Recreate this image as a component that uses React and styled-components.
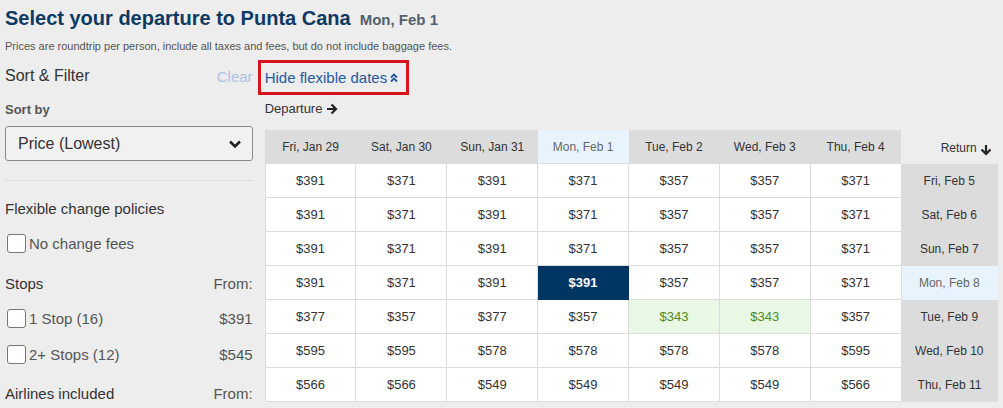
import styled, { createGlobalStyle } from "styled-components"

const Global = createGlobalStyle`
  body {
    margin: 0;
    background: #ededed;
    font-family: "Liberation Sans", Arial, sans-serif;
    color: #333;
  }
`;

const Page = styled.div`
  padding: 6px 5px 0 5px;
`;

const Title = styled.h1`
  margin: 0;
  font-size: 20px;
  font-weight: bold;
  color: #0c3a63;
  line-height: 24px;
`;

const TitleDate = styled.span`
  font-size: 15px;
  color: #52606d;
  margin-left: 9px;
`;

const Note = styled.p`
  margin: 8px 0 0 0;
  font-size: 11px;
  color: #555;
  line-height: 13px;
`;

const Main = styled.div`
  display: flex;
  gap: 12px;
  margin-top: 7px;
`;

const Sidebar = styled.div`
  width: 248px;
  display: flex;
  flex-direction: column;
`;

const SideHead = styled.div`
  display: flex;
  justify-content: space-between;
  align-items: center;
  height: 32px;
`;

const SideTitle = styled.span`
  font-size: 16px;
  color: #333;
`;

const Clear = styled.span`
  font-size: 15px;
  color: #a9c4df;
`;

const Label = styled.div`
  font-size: 13px;
  font-weight: bold;
  color: #555;
  margin-top: 10px;
  line-height: 16px;
`;

const Select = styled.div`
  margin-top: 8px;
  height: 33px;
  border: 1px solid #8a8a8a;
  border-radius: 3px;
  background: #f1f1f1;
  display: flex;
  align-items: center;
  justify-content: space-between;
  padding: 0 10px 0 12px;
  font-size: 16px;
  color: #333;
`;

const Divider = styled.hr`
  border: 0;
  border-top: 1px solid #dcdcdc;
  margin: 19px 0 0 0;
`;

const Row = styled.div`
  display: flex;
  justify-content: space-between;
  align-items: center;
  height: ${p => p.h || 36}px;
  margin-top: ${p => p.mt || 0}px;
  font-size: 15px;
  color: #333;
`;

const Check = styled.label`
  display: flex;
  align-items: center;
  gap: 3px;
  color: #555;
  padding-left: 2px;
`;

const Box = styled.span`
  width: 17px;
  height: 17px;
  border: 1px solid #777;
  border-radius: 3px;
  background: #fff;
`;

const Price = styled.span`
  color: #555;
`;

const Content = styled.div`
  display: flex;
  flex-direction: column;
`;

const ToggleWrap = styled.div`
  height: 35px;
  display: flex;
  align-items: flex-start;
`;

const Toggle = styled.a`
  margin-left: -7px;
  border: 3px solid #d9141e;
  box-sizing: border-box;
  height: 35px;
  padding: 0 8px 0 4px;
  font-size: 15px;
  color: #1f5b9e;
  display: flex;
  align-items: center;
  gap: 3px;
`;

const Axis = styled.div`
  font-size: 13px;
  color: #333;
  margin-top: 6px;
  height: 29px;
  display: flex;
  align-items: flex-start;
  gap: 4px;
  line-height: 15px;
`;

const Table = styled.table`
  border-collapse: collapse;
  table-layout: fixed;
`;

const Head = styled.th`
  width: 91px;
  height: 33px;
  padding: 0;
  font-weight: normal;
  font-size: 12px;
  color: ${p => p.active ? "#666" : "#333"};
  background: ${p => p.active ? "#e8f4fd" : "#dcdcdc"};
`;

const ReturnHead = styled.th`
  width: 91px;
  padding: 3px 5px 0 0;
  font-weight: normal;
  font-size: 12px;
  text-align: right;
  color: #333;
`;

const Cell = styled.td`
  height: 33px;
  padding: 0;
  text-align: center;
  font-size: 13px;
  border: 1px solid #dcdcdc;
  background: ${p => p.selected ? "#003663" : p.low ? "#e9f7e5" : "#fff"};
  color: ${p => p.selected ? "#fff" : p.low ? "#4d8a24" : "#333"};
  font-weight: ${p => p.selected ? "bold" : "normal"};
  border-color: ${p => p.selected ? "#003663" : "#dcdcdc"};
`;

const DateCell = styled.td`
  padding: 0;
  text-align: center;
  font-size: 12px;
  color: ${p => p.active ? "#666" : "#333"};
  background: ${p => p.active ? "#e8f4fd" : "#dcdcdc"};
`;

const ArrowIcon = styled.svg`
  vertical-align: middle;
  margin-top: 2px;
`;

const Arrow = ({ dir }) => (
  <ArrowIcon width="12" height="12" viewBox="0 0 12 12" style={{ transform: dir === "down" ? "rotate(90deg)" : "none" }}>
    <path d="M1 6h9M5.5 1.5L10 6l-4.5 4.5" stroke="#222" strokeWidth="2.2" fill="none" />
  </ArrowIcon>
);

const Chevron = () => (
  <svg width="14" height="10" viewBox="0 0 14 10">
    <path d="M2 2.5l5 5 5-5" stroke="#222" strokeWidth="2.6" fill="none" />
  </svg>
);

const DoubleUp = () => (
  <svg width="8" height="10" viewBox="0 0 8 10">
    <path d="M1 4.5l3-3 3 3M1 8.5l3-3 3 3" stroke="#1f5b9e" strokeWidth="1.8" fill="none" />
  </svg>
);

const departures = ["Fri, Jan 29", "Sat, Jan 30", "Sun, Jan 31", "Mon, Feb 1", "Tue, Feb 2", "Wed, Feb 3", "Thu, Feb 4"];

const rows = [
  { date: "Fri, Feb 5", prices: [391, 371, 391, 371, 357, 357, 371] },
  { date: "Sat, Feb 6", prices: [391, 371, 391, 371, 357, 357, 371] },
  { date: "Sun, Feb 7", prices: [391, 371, 391, 371, 357, 357, 371] },
  { date: "Mon, Feb 8", prices: [391, 371, 391, 391, 357, 357, 371], active: true, selected: 3 },
  { date: "Tue, Feb 9", prices: [377, 357, 377, 357, 343, 343, 357], low: [4, 5] },
  { date: "Wed, Feb 10", prices: [595, 595, 578, 578, 578, 578, 595] },
  { date: "Thu, Feb 11", prices: [566, 566, 549, 549, 549, 549, 566] },
];

const App = () => {
  return (
    <Page>
      <Global />
      <Title>
        Select your departure to Punta Cana<TitleDate>Mon, Feb 1</TitleDate>
      </Title>
      <Note>Prices are roundtrip per person, include all taxes and fees, but do not include baggage fees.</Note>
      <Main>
        <Sidebar>
          <SideHead>
            <SideTitle>Sort &amp; Filter</SideTitle>
            <Clear>Clear</Clear>
          </SideHead>
          <Label>Sort by</Label>
          <Select>
            Price (Lowest)
            <Chevron />
          </Select>
          <Divider />
          <Row mt={9}>Flexible change policies</Row>
          <Row h={34}>
            <Check><Box />No change fees</Check>
          </Row>
          <Row mt={5}>
            <span>Stops</span>
            <Price>From:</Price>
          </Row>
          <Row h={35}>
            <Check><Box />1 Stop (16)</Check>
            <Price>$391</Price>
          </Row>
          <Row>
            <Check><Box />2+ Stops (12)</Check>
            <Price>$545</Price>
          </Row>
          <Row h={42}>
            <span>Airlines included</span>
            <Price>From:</Price>
          </Row>
        </Sidebar>
        <Content>
          <ToggleWrap>
            <Toggle>Hide flexible dates <DoubleUp /></Toggle>
          </ToggleWrap>
          <Axis>Departure <Arrow /></Axis>
          <Table>
            <thead>
              <tr>
                {departures.map(d => (
                  <Head key={d} active={d === "Mon, Feb 1"}>{d}</Head>
                ))}
                <ReturnHead>Return <Arrow dir="down" /></ReturnHead>
              </tr>
            </thead>
            <tbody>
              {rows.map(r => (
                <tr key={r.date}>
                  {r.prices.map((p, i) => (
                    <Cell key={i} selected={r.selected === i} low={r.low && r.low.includes(i)}>${p}</Cell>
                  ))}
                  <DateCell active={r.active}>{r.date}</DateCell>
                </tr>
              ))}
            </tbody>
          </Table>
        </Content>
      </Main>
    </Page>
  )
}

export default App
